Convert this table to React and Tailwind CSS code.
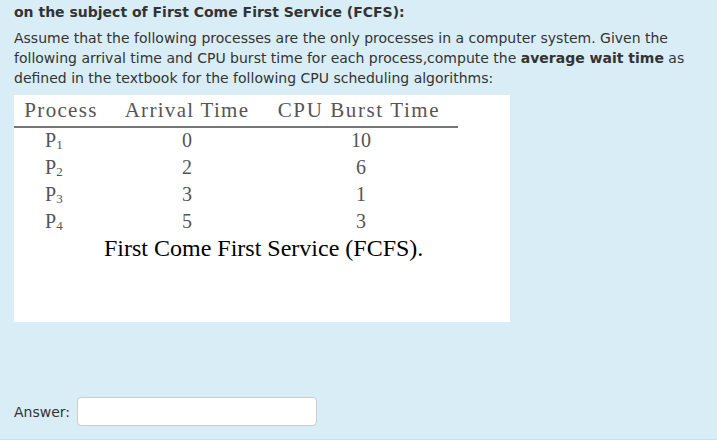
export default function App() {
  const rows = [
    ["1", "0", "10"],
    ["2", "2", "6"],
    ["3", "3", "1"],
    ["4", "5", "3"],
  ];
  return (
    <div className="w-[717px] h-[440px] bg-[#d9edf7] border-b border-[#c4e3f0] pl-[14px] pt-[2px] text-[#333] font-['DejaVu_Sans',sans-serif] text-[14px] leading-[20px] overflow-hidden">
      <div className="font-bold">on the subject of First Come First Service (FCFS):</div>
      <p className="mt-[5.5px] pr-[20px]">
        Assume that the following processes are the only processes in a computer system. Given the following arrival time and CPU burst time for each process,compute the <b>average wait time</b> as defined in the textbook for the following CPU scheduling algorithms:
      </p>
      <div className="mt-[7.5px] w-[496px] h-[227px] bg-white font-['Liberation_Serif',serif] text-[#555]">
        <div className="flex h-[31px] items-end text-[21px] leading-[24px] tracking-[1.3px] pb-[4px]">
          <div className="w-[94px] text-center">Process</div>
          <div className="ml-[4px] w-[150px] text-center">Arrival Time</div>
          <div className="ml-[2px] w-[190px] text-center tracking-[1.6px]">CPU Burst Time</div>
        </div>
        <div className="w-[444px] h-[2px] bg-[#777]" />
        <div className="text-[20px] leading-[27px] -mt-[1px]">
          {rows.map((r) => (
            <div key={r[0]} className="flex">
              <div className="w-[94px] pl-[31px]">
                P<sub className="text-[13px] relative top-[2px] align-baseline">{r[0]}</sub>
              </div>
              <div className="ml-[4px] w-[150px] text-center">{r[1]}</div>
              <div className="ml-[8px] w-[182px] text-center">{r[2]}</div>
            </div>
          ))}
        </div>
        <div className="pl-[90px] text-[24px] leading-[26px] text-black">First Come First Service (FCFS).</div>
      </div>
      <div className="mt-[75px] flex items-center">
        <span>Answer:</span>
        <div className="ml-[7px] w-[240px] h-[29px] bg-white border border-[#ccc] rounded-[4px]" />
      </div>
    </div>
  );
}
